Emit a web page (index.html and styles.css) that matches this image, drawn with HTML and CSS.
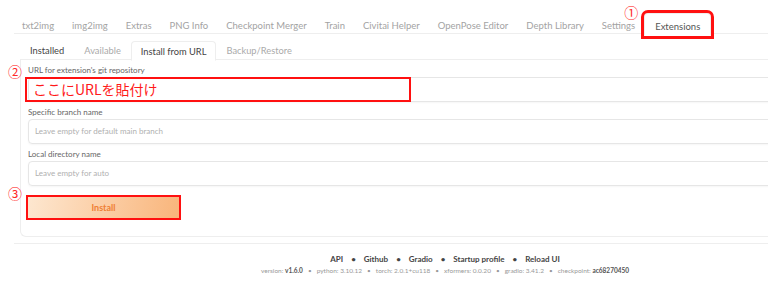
FILE: index.html
```html
<!DOCTYPE html>
<html lang="ja">
<head>
   <meta charset="UTF-8">
   <title>Extensions</title>
   <link rel="stylesheet" href="styles.css">
</head>
<body>
   <div class="page">
      <div class="app">
         <nav class="tabs">
            <button class="tab">txt2img</button>
            <button class="tab">img2img</button>
            <button class="tab">Extras</button>
            <button class="tab">PNG Info</button>
            <button class="tab">Checkpoint Merger</button>
            <button class="tab">Train</button>
            <button class="tab">Civitai Helper</button>
            <button class="tab">OpenPose Editor</button>
            <button class="tab">Depth Library</button>
            <button class="tab">Settings</button>
            <button class="tab selected">Extensions<span class="num n1">①</span></button>
         </nav>
         <div class="ext">
            <nav class="subtabs">
               <button class="subtab dark">Installed</button>
               <button class="subtab">Available</button>
               <button class="subtab selected">Install from URL</button>
               <button class="subtab">Backup/Restore</button>
            </nav>
            <div class="panel">
               <span class="num n2">②</span>
               <div class="field">
                  <label class="label">URL for extension's git repository</label>
                  <div class="box"><span class="pasted">ここにURLを貼付け</span></div>
               </div>
               <div class="field">
                  <label class="label">Specific branch name</label>
                  <div class="box">Leave empty for default main branch</div>
               </div>
               <div class="field">
                  <label class="label">Local directory name</label>
                  <div class="box">Leave empty for auto</div>
               </div>
               <span class="num n3">③</span>
               <div class="actions">
                  <button class="install">Install</button>
               </div>
            </div>
         </div>
      </div>
      <footer class="footer">
         <div class="links">
            <a>API</a><i>•</i><a>Github</a><i>•</i><a>Gradio</a><i>•</i><a>Startup profile</a><i>•</i><a>Reload UI</a>
         </div>
         <div class="versions">
            version: <b>v1.6.0</b><i>•</i>python: 3.10.12<i>•</i>torch: 2.0.1+cu118<i>•</i>xformers: 0.0.20<i>•</i>gradio: 3.41.2<i>•</i>checkpoint: <b>ac68270450</b>
         </div>
      </footer>
   </div>
</body>
</html>
```

FILE: styles.css
```css
* {
   margin: 0;
   padding: 0;
   box-sizing: border-box;
}
body {
   font-family: Lato, "Noto Sans CJK JP", sans-serif;
   background-color: #fff;
   color: #444;
   width: 768px;
   height: 289px;
   overflow: hidden;
}
.page {
   width: 862px;
   margin-left: 14px;
   padding-top: 14px;
}
.app {
   border-bottom: 1px solid #eee;
   padding-bottom: 6px;
}
button {
   font-family: inherit;
   background: none;
   border: none;
}
.tabs {
   display: flex;
   height: 20px;
   border-bottom: 1px solid #eee;
}
.tab {
   font-size: 9.5px;
   line-height: 11px;
   color: #a3a3a3;
   height: 20px;
   padding: 3px 9px 0;
}
.tab:first-child {
   padding-left: 8px;
}
.tab.selected {
   position: relative;
   color: #555;
   height: 23px;
   margin-top: -1px;
   padding: 3px 10px 0;
   background-color: #fff;
   border: 1px solid #eee;
   border-bottom-color: #fff;
   border-radius: 4px 4px 0 0;
   outline: 3px solid #ff1010;
}
.num {
   position: absolute;
   font-family: "Noto Sans CJK JP", sans-serif;
   font-size: 14px;
   line-height: 12px;
   color: #ff2a2a;
}
.n1 {
   left: -21px;
   top: -8px;
}
.ext {
   margin-left: 6px;
}
.subtabs {
   display: flex;
   margin-top: 7px;
   height: 19px;
   border-bottom: 1px solid #eee;
}
.subtab {
   font-size: 9.3px;
   color: #aaa;
   height: 19px;
   padding: 0 10px;
}
.subtab.dark {
   color: #444;
}
.subtab.selected {
   color: #444;
   height: 20px;
   padding: 0 9px;
   border: 1px solid #eee;
   border-bottom-color: #fff;
   border-radius: 4px 4px 0 0;
   background-color: #fff;
}
.panel {
   position: relative;
   border-left: 1px solid #eee;
   border-bottom: 1px solid #eee;
   border-radius: 0 0 0 6px;
   padding: 0 0 18px 7px;
}
.n2 {
   left: -13px;
   top: 5px;
}
.n3 {
   left: -13px;
   top: 127px;
}
.field {
   padding-top: 5px;
}
.label {
   display: block;
   font-size: 8px;
   line-height: 10px;
   color: #666;
   margin-bottom: 2px;
}
.box {
   height: 25px;
   border: 1px solid #e6e6e6;
   border-radius: 4px;
   box-shadow: 0 1px 2px rgba(0, 0, 0, 0.04);
   padding: 0 6px;
   font-size: 8px;
   line-height: 23px;
   color: #b0b0b0;
}
.pasted {
   display: block;
   width: 386px;
   height: 25px;
   margin: -1px 0 0 -10px;
   border: 2px solid #ff1010;
   padding-left: 6px;
   font-family: "Noto Sans CJK JP", sans-serif;
   font-size: 14px;
   line-height: 20px;
   color: #ff1a1a;
}
.actions {
   padding-top: 11px;
}
.install {
   display: block;
   width: 151px;
   height: 21px;
   font-size: 9px;
   font-weight: 700;
   color: #ef7f35;
   background: linear-gradient(100deg, #fde7d0, #f9b57b);
   outline: 2px solid #ff1010;
}
.footer {
   margin-top: 9px;
   text-align: center;
}
.links {
   font-size: 8px;
   line-height: 12px;
   font-weight: 700;
   color: #444;
}
.links i, .versions i {
   font-style: normal;
   padding: 0 8px;
}
.versions {
   font-size: 6.5px;
   line-height: 11px;
   color: #999;
}
.versions i {
   padding: 0 5px;
}
.versions b {
   color: #555;
}
```
